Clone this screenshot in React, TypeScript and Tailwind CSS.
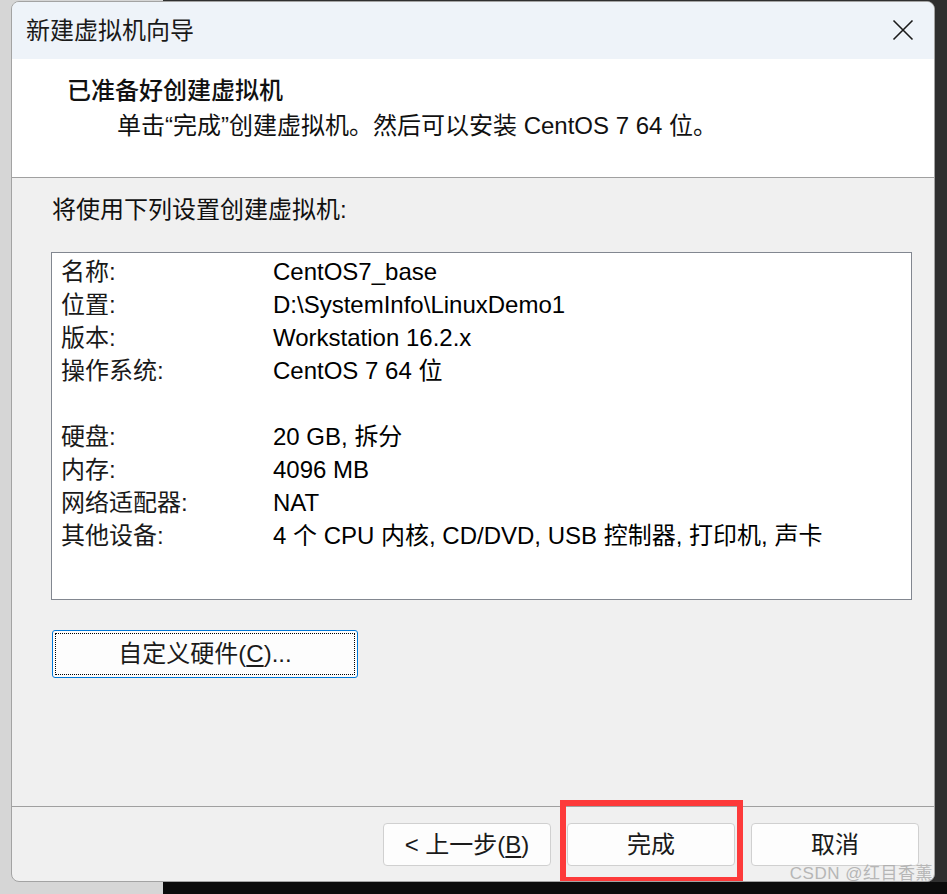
import React from "react";

const font = {
  fontFamily: '"Liberation Sans", "Noto Sans CJK SC", sans-serif',
};

const rows: [string, string][] = [
  ["名称:", "CentOS7_base"],
  ["位置:", "D:\\SystemInfo\\LinuxDemo1"],
  ["版本:", "Workstation 16.2.x"],
  ["操作系统:", "CentOS 7 64 位"],
  ["", ""],
  ["硬盘:", "20 GB, 拆分"],
  ["内存:", "4096 MB"],
  ["网络适配器:", "NAT"],
  ["其他设备:", "4 个 CPU 内核, CD/DVD, USB 控制器, 打印机, 声卡"],
];

export default function App() {
  return (
    <div
      className="relative w-[947px] h-[894px] overflow-hidden pt-[1px] pl-[11px] pr-[12px] pb-[12px] bg-[linear-gradient(to_right,#d6d6d6_163px,transparent_163px),linear-gradient(to_bottom,#2f2f2f_882px,#0b0b0b_882px)]"
      style={font}
    >
      <div className="relative flex flex-col h-full rounded-lg border border-[#a3a3a3] bg-[#f0f0f0] overflow-hidden text-[24px] text-[#111]">
        {/* Title bar */}
        <div className="flex items-center justify-between h-[57px] bg-[#eef3f9] pl-[14px] pr-[20px] shrink-0">
          <span className="leading-none text-[#1a1a1a]">新建虚拟机向导</span>
          <svg width="22" height="22" viewBox="0 0 22 22" className="mt-[-2px]">
            <path d="M1.5 1.5 L20.5 20.5 M20.5 1.5 L1.5 20.5" stroke="#1a1a1a" strokeWidth="1.6" fill="none" />
          </svg>
        </div>
        {/* Header */}
        <div className="h-[119px] bg-white border-b border-[#a0a0a0] shrink-0 pt-[13px]">
          <div
            className="pl-[55px] leading-[33px] font-medium text-[#111]"
            style={{ fontFamily: '"Noto Sans CJK SC", sans-serif' }}
          >
            已准备好创建虚拟机
          </div>
          <div className="pl-[105px] mt-[4px] leading-[33px] text-[#111]">
            单击“完成”创建虚拟机。然后可以安装 CentOS 7 64 位。
          </div>
        </div>
        {/* Main */}
        <div className="flex-1 pl-[39px] pr-[22px] pt-[15px]">
          <div className="pl-[1px] leading-[33px]">将使用下列设置创建虚拟机:</div>
          <div className="mt-[26px] h-[348px] bg-white border border-[#828790] pt-[2px] pl-[9px]">
            {rows.map(([k, v], i) => (
              <div key={i} className="flex h-[33px] leading-[33px] text-black">
                <span className="w-[212px] shrink-0 text-[#1a1a1a]">{k}</span>
                <span className="whitespace-nowrap">{v}</span>
              </div>
            ))}
          </div>
          <button className="mt-[30px] ml-[1px] w-[306px] h-[48px] rounded-[3px] border border-[#0078d7] bg-[#fdfdfd] p-[2px]">
            <span className="flex items-center justify-center w-full h-full border border-dotted border-black leading-none text-[#1a1a1a]">
              自定义硬件(<span className="underline underline-offset-[3px]">C</span>)...
            </span>
          </button>
        </div>
        {/* Footer */}
        <div className="h-[75px] shrink-0 border-t border-[#a0a0a0] flex justify-end items-start gap-[16px] pt-[16px] pr-[15px]">
          <button className="w-[168px] h-[43px] rounded-[4px] border border-[#d0d0d0] bg-[#fdfdfd] leading-none text-[#1a1a1a]">
            &lt; 上一步(<span className="underline underline-offset-[3px]">B</span>)
          </button>
          <button className="w-[168px] h-[43px] rounded-[4px] border border-[#d0d0d0] bg-[#fdfdfd] leading-none text-[#1a1a1a]">
            完成
          </button>
          <button className="w-[168px] h-[43px] rounded-[4px] border border-[#d0d0d0] bg-[#fdfdfd] leading-none text-[#1a1a1a]">
            取消
          </button>
        </div>
        {/* Red highlight */}
        <div className="absolute left-[548px] top-[798px] w-[183px] h-[83px] border-[6px] border-[#fd3a3a]" />
        {/* Watermark */}
        <div className="absolute right-[1px] bottom-[-3px] text-[17px] leading-[20px] text-[#a8a8a8] opacity-80 tracking-[0.5px]">
          CSDN @红目香薰
        </div>
      </div>
    </div>
  );
}
